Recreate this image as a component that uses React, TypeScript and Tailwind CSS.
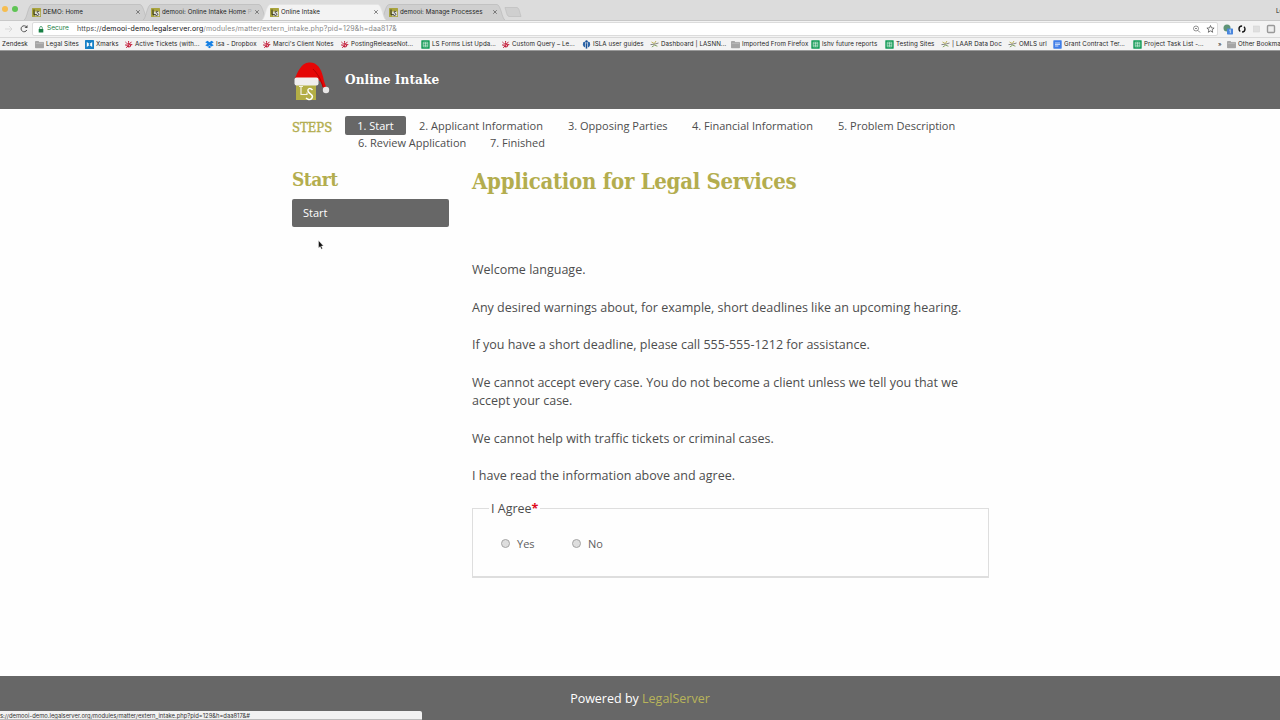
import React from "react";

type Kind = "none" | "folder" | "xmarks" | "bug" | "dropbox" | "sheet" | "info" | "spark" | "doc";

function Icon({ kind }: { kind: Kind }) {
  if (kind === "none") return null;
  return (
    <svg viewBox="0 0 9 9" className="size-[9px] shrink-0">
      {kind === "folder" && (
        <g>
          <path d="M.5 1.5h3l.8.9h4.2v5.4h-8z" fill="#a5a5a5" stroke="#838383" strokeWidth=".5" />
          <path d="M.8 3.3h7.4" stroke="#d0d0d0" strokeWidth=".5" />
        </g>
      )}
      {kind === "xmarks" && (
        <g>
          <rect width="9" height="9" rx=".6" fill="#157fc6" />
          <path d="M1.8 2l2.7 2L7.2 2v5L4.5 5 1.8 7z" fill="#fff" />
          <circle cx="4.5" cy="4.5" r=".8" fill="#157fc6" />
        </g>
      )}
      {kind === "bug" && (
        <g fill="#c3203c">
          <circle cx="4.8" cy="5.2" r="2.3" />
          <path d="M1.4 2l1.4 1.3M4.6 1v1.800M7.4 1.800L6.300 3.200M1 5h1.500M8.300 4.600H7M2.200 7.800l1-1" stroke="#c3203c" strokeWidth="1" />
          <path d="M3.800 4v1.600M5.500 4.800v1.500" stroke="#f8e0e4" strokeWidth=".8" />
        </g>
      )}
      {kind === "dropbox" && (
        <path d="M2.5.8L.2 2.3l2.3 1.5L.2 5.2l2.3 1.4 2-1.4 2 1.4 2.3-1.4-2.3-1.4 2.3-1.5L6.5.8l-2 1.4zM4.5 5.8L2.7 7l1.8 1.2L6.300 7z" fill="#1580e4" />
      )}
      {kind === "sheet" && (
        <g>
          <rect x=".3" y=".3" width="8.400" height="8.400" rx=".4" fill="#159b58" />
          <path d="M2.200 2.200h4.600v4.600H2.200zM4.500 2.200v4.600M2.200 3.700h4.600M2.200 5.300h4.600" fill="none" stroke="#d9f1e4" strokeWidth=".6" />
        </g>
      )}
      {kind === "doc" && (
        <g>
          <rect x=".3" y=".3" width="8.400" height="8.400" rx=".6" fill="#3f7de8" />
          <path d="M2 3h5M2 4.500h5M2 6h3.400" stroke="#fff" strokeWidth=".7" />
        </g>
      )}
      {kind === "info" && (
        <g>
          <path d="M3.500 1.500L1.200 2.200.8 5l1.300 2.300 1-.4V3.500M5.500 1.500l2.300.7.4 2.800-1.300 2.300-1-.4V3.500" fill="#2a64a8" />
          <path d="M3.700 3.200h1.600v5.400H3.700z" fill="#164f96" />
          <circle cx="4.500" cy="1.500" r="1.200" fill="#164f96" />
        </g>
      )}
      {kind === "spark" && (
        <g fill="none" strokeWidth=".9">
          <path d="M1.500 2l2.800 1.600L6 1" stroke="#b9ad4a" />
          <path d="M.5 4.600l4-.4 4-1.200" stroke="#777" />
          <path d="M1.800 7L4.600 5.200l2.800 1" stroke="#7b9a55" />
        </g>
      )}
    </svg>
  );
}

function Bookmark({ kind, text, className }: { kind: Kind; text: string; className: string }) {
  return (
    <span className={`flex h-full shrink-0 items-center gap-[2px] whitespace-nowrap ${className}`}>
      <Icon kind={kind} />
      <span>{text}</span>
    </span>
  );
}

function Favicon() {
  return (
    <svg viewBox="0 0 9 9" className="size-[9px] shrink-0">
      <rect width="9" height="9" rx=".5" fill="#a9a43d" />
      <path d="M3 3.500h5.200v4.700H3z" fill="#dcdcd6" />
      <path d="M2 1.500v5.200h2.800" fill="none" stroke="#33331f" strokeWidth="1" />
      <path d="M7 3.800c-1.500-1-2.500-.2-1.700.8s2 1 1.400 2.200-1.700.8-2.300.2" fill="none" stroke="#333" strokeWidth=".9" />
    </svg>
  );
}

function Tab({ title, active = false, fade = false, className }: { title: string; active?: boolean; fade?: boolean; className: string }) {
  return (
    <div className={`relative h-4 shrink-0 ${className}`}>
      <svg viewBox="0 0 124 16" preserveAspectRatio="none" className="absolute top-0 left-0 h-4 w-[124px]">
        <path d="M0 16C3 15 4 1 8 .5h108C120 1 121 15 124 16" fill={active ? "#f3f3f3" : "#cfcfcf"} stroke={active ? "#e0e0e0" : "#b5b5b5"} strokeWidth=".6" />
      </svg>
      <div className="relative flex h-4 items-center pl-[8px]">
        <Favicon />
        <span className="ml-[2px] w-[90px] overflow-hidden text-[6.200px] tracking-[0.060px] whitespace-nowrap text-[#222]">
          {fade ? (
            <span>
              demooi: Online Intake Home <span className="text-[#aaa]">P</span>
            </span>
          ) : (
            title
          )}
        </span>
        <svg viewBox="0 0 4 4" className="ml-[3px] size-[4px]">
          <path d="M.2.2l3.600 3.600M3.800.2L.2 3.800" stroke="#555" strokeWidth=".7" />
        </svg>
      </div>
    </div>
  );
}

function SantaLogo() {
  return (
    <svg viewBox="0 0 40 40" className="mt-[3px] h-10 w-10">
      <rect x="4" y="21" width="20" height="17" fill="#b3ae45" />
      <path d="M3 16C6 10 9 1 17 .5c8-.5 12 6 14 14 1 5 2 8 4 12l-4-1c-1-4-3-7-6-9z" fill="#e50606" />
      <path d="M21 7c4 4 8 10 10 18" fill="none" stroke="#b40000" strokeWidth="1" />
      <rect x="2.500" y="15.500" width="24" height="8" rx="2" fill="#f0eeee" />
      <circle cx="34" cy="28" r="3.200" fill="#e9e7e7" />
      <path d="M7 24.500h4M9 24.500v8h6v-2" fill="none" stroke="#f4f2e4" strokeWidth="1.200" />
      <path d="M20.500 28c-2.500-3-6-1-4 2s5.500 3 3.500 6-5 1-6 0" fill="none" stroke="#fff" strokeWidth="1.400" />
    </svg>
  );
}

function Browser() {
  return (
    <div className="h-[51px] font-['Inter',sans-serif]">
      <div className="flex h-[21px] items-end border-b border-[#c8c8c8] bg-[#dcdcdc]">
        <div className="flex h-4 w-6 items-start gap-[4px] pt-[2px] pl-[2px]">
          <span className="size-[6px] rounded-full bg-[#f6bd4f]" />
          <span className="size-[6px] rounded-full bg-[#5fc454]" />
        </div>
        <Tab title="DEMO: Home" className="w-[119px]" />
        <Tab title="demooi: Online Intake Home P" fade className="w-[119px]" />
        <Tab title="Online Intake" active className="z-10 w-[119px]" />
        <Tab title="demooi: Manage Processes" className="w-[123px]" />
        <svg viewBox="0 0 18 10" className="mb-[3px] h-[10px] w-[18px]">
          <path d="M1 .5h12q1 0 2 2l2 7H5q-1 0-2-2z" fill="#cfcfcf" stroke="#bababa" strokeWidth=".6" />
        </svg>
        <span className="mr-[-3px] mb-[5px] ml-auto text-[6.200px] text-[#222]">Le</span>
      </div>
      <div className="flex h-4 items-center bg-[#f3f3f3] text-[7px]">
        <svg viewBox="0 0 32 12" className="h-3 w-8 shrink-0" fill="none">
          <path d="M5 6h7M9 3l3 3-3 3" stroke="#d2d2d2" strokeWidth=".8" />
          <path d="M26.500 4a3 3 0 1 0 .3 3" stroke="#555" strokeWidth="1" />
          <path d="M27.500 2v3h-3z" fill="#555" />
        </svg>
        <div className="flex h-[14px] w-[1186px] shrink-0 items-center rounded-[2px] border border-[#dcdcdc] bg-white pl-[5px] whitespace-nowrap">
          <svg viewBox="0 0 6 7" className="h-[7px] w-[6px]">
            <rect x=".7" y="3" width="4.600" height="3.500" fill="#188045" />
            <path d="M1.700 3V1.800a1.300 1.300 0 0 1 2.600 0V3" fill="none" stroke="#188045" strokeWidth=".7" />
          </svg>
          <span className="ml-[3px] w-[30px] text-[6.600px] text-[#188045]">Secure</span>
          <span className="tracking-[0.140px] text-[#888]">
            <span className="text-[#444]">https://</span>
            <span className="text-[#111]">demooi-demo.legalserver.org</span>/modules/matter/extern_intake.php?pid=129&amp;h=daa817&amp;
          </span>
          <svg viewBox="0 0 24 10" className="mr-0 ml-auto h-[10px] w-6" fill="none">
            <circle cx="3" cy="4.500" r="2.500" stroke="#666" strokeWidth=".7" />
            <path d="M5 6.500l2 2M2 4.500h2" stroke="#666" strokeWidth=".8" />
            <path d="M17.500 1.500l1 2.400 2.600.2-2 1.700.6 2.500-2.200-1.400-2.200 1.400.6-2.500-2-1.700 2.600-.2z" stroke="#444" strokeWidth=".7" />
          </svg>
        </div>
        <svg viewBox="0 0 62 14" className="h-[14px] w-[62px] shrink-0">
          <circle cx="9" cy="6" r="3.500" fill="#609477" />
          <rect x="9" y="6.500" width="6" height="6" rx=".7" fill="#4a87de" />
          <path d="M11.300 8.300l1-.6v3.500" fill="none" stroke="#fff" strokeWidth=".7" />
          <circle cx="24" cy="7" r="3" fill="none" stroke="#161616" strokeWidth="1.400" strokeDasharray="7.500 1.900" strokeDashoffset="3" />
          <rect x="35.500" y="4" width="6" height="6" fill="#dfdfdf" stroke="#d0d0d0" strokeWidth=".5" />
          <rect x="49.500" y="3.500" width="7" height="7" rx="1" fill="#eee" stroke="#999" strokeWidth="1.400" />
        </svg>
      </div>
      <div className="flex h-[14px] items-center overflow-hidden border-t border-[#d9d9d9] border-b border-b-[#999] bg-[#f3f3f3] pl-[2px] text-[6.200px] tracking-[0.080px] text-[#1d1d1d]">
        <Bookmark kind="none" text="Zendesk" className="w-[33px]" />
        <Bookmark kind="folder" text="Legal Sites" className="w-[50px]" />
        <Bookmark kind="xmarks" text="Xmarks" className="w-[39px]" />
        <Bookmark kind="bug" text="Active Tickets (with..." className="w-[81px]" />
        <Bookmark kind="dropbox" text="Isa - Dropbox" className="w-[57px]" />
        <Bookmark kind="bug" text="Marci's Client Notes" className="w-[78px]" />
        <Bookmark kind="bug" text="PostingReleaseNot..." className="w-[81px]" />
        <Bookmark kind="sheet" text="LS Forms List Upda..." className="w-[80px]" />
        <Bookmark kind="bug" text="Custom Query – Le..." className="w-[81px]" />
        <Bookmark kind="info" text="ISLA user guides" className="w-[68px]" />
        <Bookmark kind="spark" text="Dashboard | LASNN..." className="w-[81px]" />
        <Bookmark kind="folder" text="Imported From Firefox" className="w-[80px]" />
        <Bookmark kind="sheet" text="lshv future reports" className="w-[74px]" />
        <Bookmark kind="sheet" text="Testing Sites" className="w-[56px]" />
        <Bookmark kind="spark" text="| LAAR Data Doc" className="w-[67px]" />
        <Bookmark kind="spark" text="OMLS url" className="w-[45px]" />
        <Bookmark kind="doc" text="Grant Contract Ter..." className="w-[80px]" />
        <Bookmark kind="sheet" text="Project Task List -..." className="w-[85px]" />
        <Bookmark kind="none" text="»" className="w-[9px]" />
        <Bookmark kind="folder" text="Other Bookmarks" className="w-[70px]" />
      </div>
    </div>
  );
}

function Choice({ label, className }: { label: string; className: string }) {
  return (
    <label className={`flex items-center text-[11px] text-[#606060] ${className}`}>
      <span className="mr-[7px] size-[9px] rounded-full border border-[#a5a5a5] bg-[#dedede]" />
      {label}
    </label>
  );
}

export default function App() {
  return (
    <div className="relative flex h-[720px] w-[1280px] flex-col overflow-hidden bg-[#fefefe] font-['Open_Sans',sans-serif] text-[#4d4d4d]">
      <Browser />
      <header className="flex h-[58px] items-center bg-[#676767] pl-[292px]">
        <SantaLogo />
        <h1 className="mb-[1px] ml-[13px] font-['DejaVu_Serif_Condensed','DejaVu_Serif',serif] text-[13.500px] font-bold tracking-[0.050px] text-white">Online Intake</h1>
      </header>
      <nav className="flex h-[53px] pt-[7px] pl-[292px]">
        <span className="mt-[3px] w-[53px] font-['DejaVu_Serif_Condensed','DejaVu_Serif',serif] text-[13px] leading-[18px] text-[#b3ad4e] [-webkit-text-stroke:0.4px_#b3ad4e]">STEPS</span>
        <div className="text-[11px] whitespace-nowrap">
          <div className="flex h-[19px] items-center pt-px">
            <span className="-mt-px flex h-[19px] w-[61px] items-center justify-center rounded-[2px] bg-[#676767] pt-px text-white">1. Start</span>
            <span className="ml-[13px] w-[149px]">2. Applicant Information</span>
            <span className="w-[124px]">3. Opposing Parties</span>
            <span className="w-[146px]">4. Financial Information</span>
            <span>5. Problem Description</span>
          </div>
          <div className="flex h-4 items-center pl-[13px]">
            <span className="w-[132px]">6. Review Application</span>
            <span>7. Finished</span>
          </div>
        </div>
      </nav>
      <main className="flex min-h-0 flex-1 pl-[292px]">
        <aside className="w-[180px] pt-[2px]">
          <h2 className="font-['DejaVu_Serif_Condensed','DejaVu_Serif',serif] text-[19px] leading-[30px] font-bold tracking-[-0.500px] text-[#b3ad4e]">Start</h2>
          <div className="mt-[5px] flex h-7 w-[157px] items-center rounded-[2px] bg-[#676767] pt-px pl-[11px] text-[11px] text-white">Start</div>
        </aside>
        <section className="w-[517px]">
          <h2 className="pt-[4px] font-['DejaVu_Serif_Condensed','DejaVu_Serif',serif] text-[22px] leading-[30px] font-bold tracking-[-0.280px] whitespace-nowrap text-[#b3ad4e]">Application for Legal Services</h2>
          <div className="mt-[65px] flex flex-col gap-[18.750px] text-[12.520px] leading-[18.750px] whitespace-nowrap">
            <p>Welcome language.</p>
            <p>Any desired warnings about, for example, short deadlines like an upcoming hearing.</p>
            <p>If you have a short deadline, please call 555-555-1212 for assistance.</p>
            <p>
              We cannot accept every case. You do not become a client unless we tell you that we
              <br />
              accept your case.
            </p>
            <p>We cannot help with traffic tickets or criminal cases.</p>
            <p>I have read the information above and agree.</p>
          </div>
          <fieldset className="mt-[13.250px] h-[79px] w-[517px] border border-b-2 border-[#dedede] pl-[16px]">
            <legend className="px-[2px] text-[12.500px] leading-[19px]">
              I Agree<span className="font-bold text-[#e00b1c]">*</span>
            </legend>
            <div className="flex h-[51px] items-center pl-[12px]">
              <Choice label="Yes" className="w-[71px]" />
              <Choice label="No" className="w-[60px]" />
            </div>
          </fieldset>
        </section>
      </main>
      <footer className="flex h-11 shrink-0 items-center justify-center bg-[#676767] pt-[2px] text-[12.500px] text-white">
        <span>
          Powered by <span className="text-[#b8b45a]">LegalServer</span>
        </span>
      </footer>
      <div className="absolute bottom-0 left-0 h-[9px] w-[422px] overflow-hidden rounded-tr-[2px] border-b border-[#bbb] bg-[#f2f2f2] pl-0 font-['Inter',sans-serif] text-[5.850px] leading-[9px] whitespace-nowrap text-[#333]">
        <span>s://demooi-demo.legalserver.org/modules/matter/extern_intake.php?pid=129&amp;h=daa817&amp;#</span>
      </div>
      <svg viewBox="0 0 6 10" className="absolute top-[240px] left-[318px] h-[10px] w-[6px]">
        <path d="M.5.5v7.500l1.700-1.500 1.200 2.700 1.100-.6-1.100-2.500h2.100z" fill="#111" stroke="#fff" strokeWidth=".4" />
      </svg>
    </div>
  );
}
